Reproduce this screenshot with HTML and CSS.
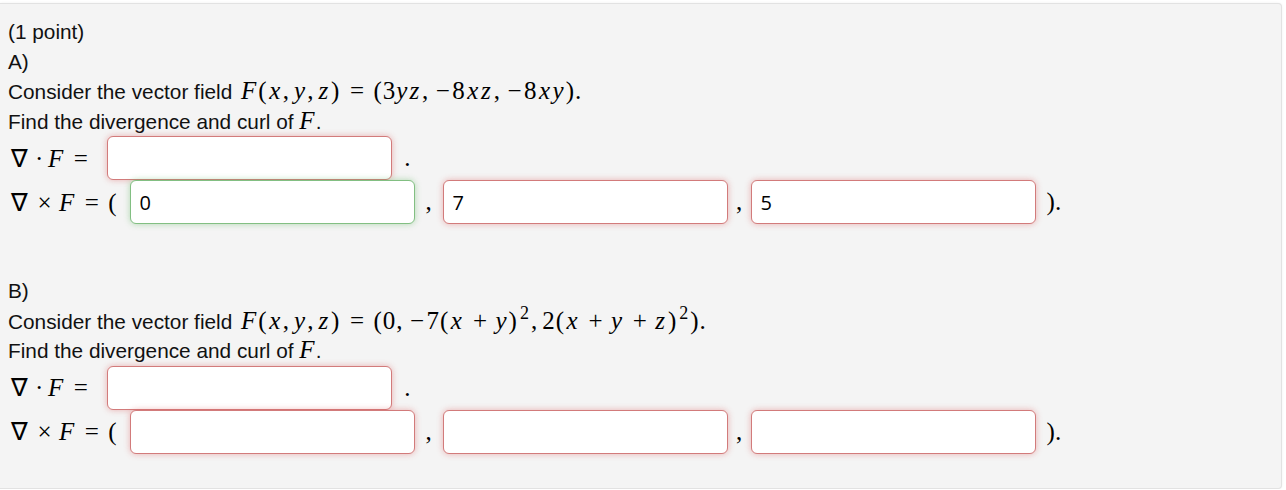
FILE: index.html
```html
<!DOCTYPE html>
<html>
<head>
<meta charset="utf-8">
<link rel="stylesheet" href="styles.css">
</head>
<body>
<div class="problem">
  <div class="line">(1 point)</div>
  <div class="line">A)</div>
  <div class="line">Consider the vector field <span class="m expr"><i>F</i>(<i class="x">x</i>,<span class="th"></span><i>y</i>,<span class="th"></span><i class="z">z</i>)<span class="rel">=</span>(3<i>y</i><i class="z">z</i>,<span class="th"></span><span class="mi">−</span>8<i class="x">x</i><i class="z">z</i>,<span class="th"></span><span class="mi">−</span>8<i class="x">x</i><i>y</i>).</span></div>
  <div class="line">Find the divergence and curl of <span class="m"><i>F</i></span>.</div>
  <div class="row first">
    <span class="m lbl"><span class="nabla">∇</span><span class="bin cdot">·</span><i>F</i><span class="rel">=</span></span>
    <input class="ans bad div-in" type="text" value="">
    <span class="m punct dot">.</span>
  </div>
  <div class="row">
    <span class="m lbl"><span class="nabla">∇</span><span class="bin times">×</span><i>F</i><span class="rel r2">=</span>(</span>
    <input class="ans good c1" type="text" value="0">
    <span class="m punct comma">,</span>
    <input class="ans bad" type="text" value="7">
    <span class="m punct comma2">,</span>
    <input class="ans bad" type="text" value="5">
    <span class="m punct close">).</span>
  </div>

  <div class="spacer"></div>

  <div class="line">B)</div>
  <div class="line">Consider the vector field <span class="m expr"><i>F</i>(<i class="x">x</i>,<span class="th"></span><i>y</i>,<span class="th"></span><i class="z">z</i>)<span class="rel">=</span>(0,<span class="th"></span><span class="mi">−</span>7(<i class="x">x</i><span class="bin plus">+</span><i>y</i>)<sup>2</sup>,<span class="th"></span>2(<i class="x">x</i><span class="bin plus">+</span><i>y</i><span class="bin plus">+</span><i class="z">z</i>)<sup>2</sup>).</span></div>
  <div class="line">Find the divergence and curl of <span class="m"><i>F</i></span>.</div>
  <div class="row first">
    <span class="m lbl"><span class="nabla">∇</span><span class="bin cdot">·</span><i>F</i><span class="rel">=</span></span>
    <input class="ans bad div-in" type="text" value="">
    <span class="m punct dot">.</span>
  </div>
  <div class="row">
    <span class="m lbl"><span class="nabla">∇</span><span class="bin times">×</span><i>F</i><span class="rel r2">=</span>(</span>
    <input class="ans bad c1" type="text" value="">
    <span class="m punct comma">,</span>
    <input class="ans bad" type="text" value="">
    <span class="m punct comma2">,</span>
    <input class="ans bad" type="text" value="">
    <span class="m punct close">).</span>
  </div>
</div>
</body>
</html>
```

FILE: styles.css
```css
html, body {
  margin: 0;
  padding: 0;
  background: #ffffff;
}
body {
  padding-top: 3px;
}
.problem {
  width: 1282px;
  height: 486px;
  box-sizing: border-box;
  background: #f4f4f4;
  border: 1px solid #e2e2e2;
  border-left: none;
  border-radius: 0 4px 4px 0;
  box-shadow: 0 0 3px rgba(0,0,0,0.06);
  padding: 13px 0 0 8px;
  font-family: "Liberation Sans", Arial, sans-serif;
  font-size: 20.8px;
  color: #111;
}
.line {
  height: 29.5px;
  line-height: 29.5px;
  white-space: nowrap;
}
.m {
  font-family: "Liberation Serif", "Times New Roman", serif;
  font-size: 25px;
  color: #000;
}
.expr {
  margin-left: 3px;
  letter-spacing: 1px;
}
.m i {
  font-style: italic;
  padding: 0 1px 0 0;
}
.m i.x {
  padding: 0 1.5px;
}
.m i.z {
  padding-right: 2px;
}
.m sup {
  font-size: 18px;
  line-height: 0;
  vertical-align: 10px;
  letter-spacing: 0;
  padding: 0 2px 0 2px;
}
.rel {
  display: inline-block;
  width: 19px;
  text-align: center;
  margin: 0 7px;
  letter-spacing: 0;
}
.r2 {
  margin-right: 7px;
}
.mi {
  display: inline-block;
  width: 19px;
  text-align: center;
  letter-spacing: 0;
}
.bin {
  display: inline-block;
  text-align: center;
  margin: 0 5px;
  letter-spacing: 0;
}
.cdot {
  width: 8px;
}
.times {
  width: 19px;
}
.plus {
  width: 19px;
  margin: 0 6px;
}
.nabla {
  display: inline-block;
  width: 21px;
  text-align: center;
}
.th {
  display: inline-block;
  width: 4px;
}
.row {
  height: 44px;
  display: flex;
  align-items: center;
  white-space: nowrap;
}
.row.first {
  margin-top: 1px;
}
.lbl {
  display: inline-block;
  padding-left: 1px;
}
.ans {
  box-sizing: border-box;
  width: 285px;
  height: 44px;
  margin: 0;
  padding: 0 9px;
  font-family: "Open Sans", "Liberation Sans", sans-serif;
  font-size: 20px;
  color: #000;
  background: #fff;
  border-radius: 6px;
  outline: none;
}
.bad {
  border: 1px solid #d27b7b;
  box-shadow: 0 0 6px rgba(220, 90, 90, 0.45);
}
.good {
  border: 1px solid #82bf82;
  box-shadow: 0 0 6px rgba(90, 180, 90, 0.45);
}
.div-in {
  margin-left: 10px;
}
.c1 {
  margin-left: 13px;
}
.punct {
  display: inline-block;
}
.dot {
  margin-left: 12px;
}
.comma {
  width: 28px;
  text-align: center;
}
.comma2 {
  width: 23px;
  text-align: center;
}
.close {
  margin-left: 11px;
}
.spacer {
  height: 52px;
}
```
